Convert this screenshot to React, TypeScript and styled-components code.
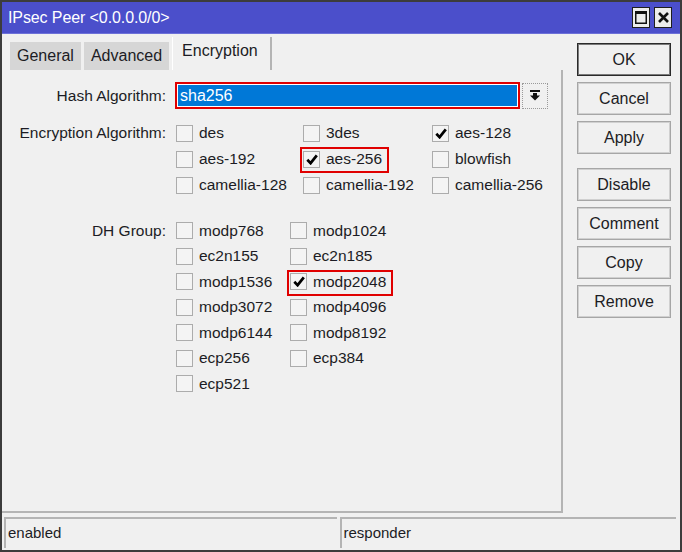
import React from "react";
import styled, { createGlobalStyle } from "styled-components";

const Global = createGlobalStyle`
  html, body { margin: 0; padding: 0; background: #f0f0f0; }
  body { font-family: "Liberation Sans", Arial, sans-serif; }
  * { box-sizing: border-box; }
`;

const Window = styled.div`
  width: 682px;
  height: 552px;
  border: 2px solid #3c3c3c;
  background: #f0f0f0;
  display: flex;
  flex-direction: column;
  color: #1c1c24;
  font-size: 15.5px;
  overflow: hidden;
`;

const TitleBar = styled.div`
  height: 32px;
  background: #4b4fcb;
  display: flex;
  align-items: center;
  padding: 0 8px 0 6px;
  color: #ffffff;
  font-size: 16px;
  border-bottom: 1px solid #6c70d8;
`;

const TitleText = styled.div`
  flex: 1;
  letter-spacing: -0.1px;
`;

const TitleButton = styled.div`
  width: 18px;
  height: 21px;
  background: #ececec;
  border: 1px solid #1e1e1e;
  margin-left: 4px;
  display: flex;
  align-items: center;
  justify-content: center;
`;

const Body = styled.div`
  flex: 1;
  display: flex;
  min-height: 0;
`;

const Main = styled.div`
  width: 561px;
  display: flex;
  flex-direction: column;
`;

const TabRow = styled.div`
  height: 36px;
  display: flex;
  align-items: flex-end;
  padding-left: 8px;
  gap: 3px;
  font-size: 16px;
`;

const Tab = styled.div<{ $active?: boolean }>`
  height: ${(p) => (p.$active ? 33 : 28)}px;
  padding: ${(p) => (p.$active ? "0 12px 5px 9px" : "0 7px")};
  display: flex;
  align-items: center;
  background: ${(p) => (p.$active ? "transparent" : "#d6d6d6")};
  border-right: ${(p) => (p.$active ? "2px solid #b4b4b4" : "none")};
  border-left: ${(p) => (p.$active ? "1px solid #ffffff" : "none")};
`;

const Panel = styled.div`
  height: 443px;
  border-right: 2px solid #b4b4b4;
  border-bottom: 2px solid #b4b4b4;
  padding-top: 12px;
  display: flex;
  flex-direction: column;
`;

const FieldRow = styled.div<{ $top?: number }>`
  display: grid;
  grid-template-columns: 164px 1fr;
  column-gap: 10px;
  margin-top: ${(p) => p.$top ?? 0}px;
`;

const Label = styled.div<{ $h: number }>`
  text-align: right;
  height: ${(p) => p.$h}px;
  line-height: ${(p) => p.$h}px;
  white-space: nowrap;
`;

const ComboWrap = styled.div`
  display: flex;
  align-items: center;
  gap: 2px;
  margin-left: -1px;
`;

const ComboField = styled.div`
  width: 345px;
  height: 27px;
  border: 2px solid #e00000;
  padding: 1px;
  background: #ffffff;
`;

const ComboValue = styled.div`
  height: 100%;
  background: #0078d7;
  color: #ffffff;
  line-height: 21px;
  padding-left: 2px;
  font-size: 16px;
`;

const DropButton = styled.div`
  width: 26px;
  height: 26px;
  border: 1px dotted #9a9a9a;
  background: #f0f0f0;
  display: flex;
  align-items: center;
  justify-content: center;
`;

const CheckGrid = styled.div<{ $cols: string; $row: number }>`
  display: grid;
  grid-template-columns: ${(p) => p.$cols};
  grid-auto-rows: ${(p) => p.$row}px;
`;

const CheckItem = styled.div<{ $mark?: boolean }>`
  position: relative;
  display: flex;
  align-items: center;
  gap: 6px;
  justify-self: start;
  white-space: nowrap;
  &::after {
    content: "";
    display: ${(p) => (p.$mark ? "block" : "none")};
    position: absolute;
    top: 1px;
    bottom: -1px;
    left: -3px;
    right: -7px;
    border: 2px solid #e00000;
    pointer-events: none;
  }
`;

const Box = styled.div`
  width: 17px;
  height: 17px;
  border: 1px solid #acacac;
  background: #f4f4f4;
  display: flex;
  align-items: center;
  justify-content: center;
`;

const Side = styled.div`
  flex: 1;
  padding: 9px 0 0 14px;
  display: flex;
  flex-direction: column;
`;

const Button = styled.div<{ $default?: boolean; $gap?: number }>`
  width: 94px;
  height: 33px;
  margin-bottom: ${(p) => p.$gap ?? 6}px;
  display: flex;
  align-items: center;
  justify-content: center;
  background: #f0f0f0;
  font-size: 16px;
  border: 1px solid ${(p) => (p.$default ? "#2a2a2a" : "#a6a6a6")};
  box-shadow: inset 0 0 0 1px ${(p) => (p.$default ? "#7a7a7a" : "#d0d0d0")};
`;

const StatusBar = styled.div`
  height: 33px;
  margin-top: 3px;
  display: flex;
  gap: 3px;
  padding: 0 4px 2px 2px;
`;

const StatusCell = styled.div<{ $w: number }>`
  width: ${(p) => p.$w}px;
  border-top: 2px solid #b4b4b4;
  border-left: 2px solid #b4b4b4;
  display: flex;
  align-items: center;
  padding-left: 2px;
  padding-bottom: 2px;
  font-size: 15px;
`;

const Check = () => (
  <svg width="12" height="11" viewBox="0 0 12 11">
    <path d="M1.3 5.8 L4.6 9.2 L10.8 1.3" fill="none" stroke="#000" strokeWidth="2.7" />
  </svg>
);

type Opt = { name: string; on?: boolean; mark?: boolean };

const CheckBox = ({ o }: { o: Opt }) => (
  <CheckItem $mark={o.mark}>
    <Box>{o.on && <Check />}</Box>
    <span>{o.name}</span>
  </CheckItem>
);

const encOpts: Opt[] = [
  { name: "des" },
  { name: "3des" },
  { name: "aes-128", on: true },
  { name: "aes-192" },
  { name: "aes-256", on: true, mark: true },
  { name: "blowfish" },
  { name: "camellia-128" },
  { name: "camellia-192" },
  { name: "camellia-256" },
];

const dhOpts: Opt[] = [
  { name: "modp768" },
  { name: "modp1024" },
  { name: "ec2n155" },
  { name: "ec2n185" },
  { name: "modp1536" },
  { name: "modp2048", on: true, mark: true },
  { name: "modp3072" },
  { name: "modp4096" },
  { name: "modp6144" },
  { name: "modp8192" },
  { name: "ecp256" },
  { name: "ecp384" },
  { name: "ecp521" },
];

export default function App() {
  return (
    <>
      <Global />
      <Window>
        <TitleBar>
          <TitleText>IPsec Peer &lt;0.0.0.0/0&gt;</TitleText>
          <TitleButton>
            <svg width="12" height="13" viewBox="0 0 12 13">
              <rect x="0.75" y="0.75" width="10.5" height="11.5" fill="none" stroke="#111" strokeWidth="1.5" />
              <rect x="0" y="0" width="12" height="3" fill="#111" />
            </svg>
          </TitleButton>
          <TitleButton>
            <svg width="11" height="11" viewBox="0 0 11 11">
              <path d="M1 1 L10 10 M10 1 L1 10" stroke="#111" strokeWidth="2.6" />
            </svg>
          </TitleButton>
        </TitleBar>
        <Body>
          <Main>
            <TabRow>
              <Tab>General</Tab>
              <Tab>Advanced</Tab>
              <Tab $active>Encryption</Tab>
            </TabRow>
            <Panel>
              <FieldRow>
                <Label $h={27}>Hash Algorithm:</Label>
                <ComboWrap>
                  <ComboField>
                    <ComboValue>sha256</ComboValue>
                  </ComboField>
                  <DropButton>
                    <svg width="10" height="11" viewBox="0 0 10 11">
                      <rect x="0" y="0" width="10" height="2" fill="#111" />
                      <rect x="3" y="3" width="4" height="3" fill="#111" />
                      <path d="M0 5.5 H10 L5 10.5 Z" fill="#111" />
                    </svg>
                  </DropButton>
                </ComboWrap>
              </FieldRow>
              <FieldRow $top={11}>
                <Label $h={26}>Encryption Algorithm:</Label>
                <CheckGrid $cols="127px 129px 1fr" $row={26}>
                  {encOpts.map((o) => (
                    <CheckBox key={o.name} o={o} />
                  ))}
                </CheckGrid>
              </FieldRow>
              <FieldRow $top={20}>
                <Label $h={25.5}>DH Group:</Label>
                <CheckGrid $cols="114px 114px" $row={25.5}>
                  {dhOpts.map((o) => (
                    <CheckBox key={o.name} o={o} />
                  ))}
                </CheckGrid>
              </FieldRow>
            </Panel>
          </Main>
          <Side>
            <Button $default>OK</Button>
            <Button>Cancel</Button>
            <Button $gap={14}>Apply</Button>
            <Button>Disable</Button>
            <Button>Comment</Button>
            <Button>Copy</Button>
            <Button>Remove</Button>
          </Side>
        </Body>
        <StatusBar>
          <StatusCell $w={333}>enabled</StatusCell>
          <StatusCell $w={337}>responder</StatusCell>
        </StatusBar>
      </Window>
    </>
  );
}
